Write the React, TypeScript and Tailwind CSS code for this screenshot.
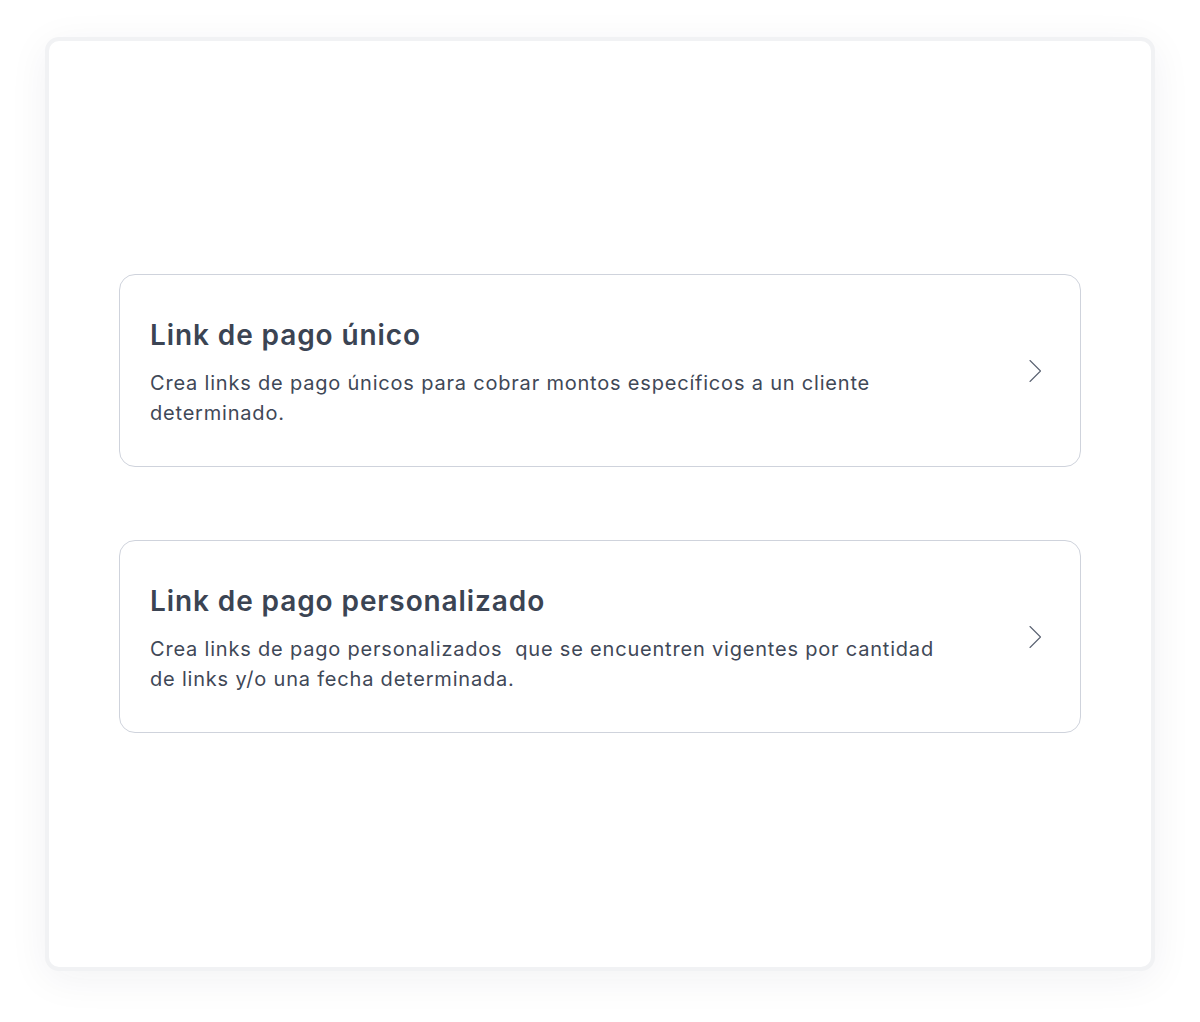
import React from "react";

function Chevron() {
  return (
    <svg width="14" height="24" viewBox="0 0 14 24" fill="none" className="shrink-0">
      <path d="M2 1.5 L12.5 12 L2 22.5" stroke="#5b6372" strokeWidth="1.1" strokeLinecap="round" strokeLinejoin="round" />
    </svg>
  );
}

function OptionCard({ title, desc }: { title: string; desc: string }) {
  return (
    <div className="flex items-center rounded-[16px] border border-[#cfd3dc] bg-white pl-[30px] pr-[38px] h-[193px]">
      <div className="flex-1 pt-[4px]">
        <div className="text-[28px] leading-[36px] font-semibold tracking-[0.9px] text-[#3b4453]">{title}</div>
        <div className="mt-[15px] w-[805px] text-[20px] leading-[30px] tracking-[0.8px] text-[#3f4857] whitespace-pre-wrap">{desc}</div>
      </div>
      <Chevron />
    </div>
  );
}

export default function App() {
  return (
    <div
      className="w-[1200px] h-[1022px] bg-white pt-[37px] pl-[45px]"
      style={{ fontFamily: "Inter, 'Noto Sans', sans-serif" }}
    >
      <div className="w-[1110px] h-[934px] rounded-[14px] border-[4px] border-[#f1f2f4] bg-white shadow-[0_8px_40px_rgba(30,40,60,0.06)] flex flex-col pt-[233px] px-[70px] gap-[73px]">
        <OptionCard
          title="Link de pago único"
          desc="Crea links de pago únicos para cobrar montos específicos a un cliente determinado."
        />
        <OptionCard
          title="Link de pago personalizado"
          desc="Crea links de pago personalizados  que se encuentren vigentes por cantidad de links y/o una fecha determinada."
        />
      </div>
    </div>
  );
}
